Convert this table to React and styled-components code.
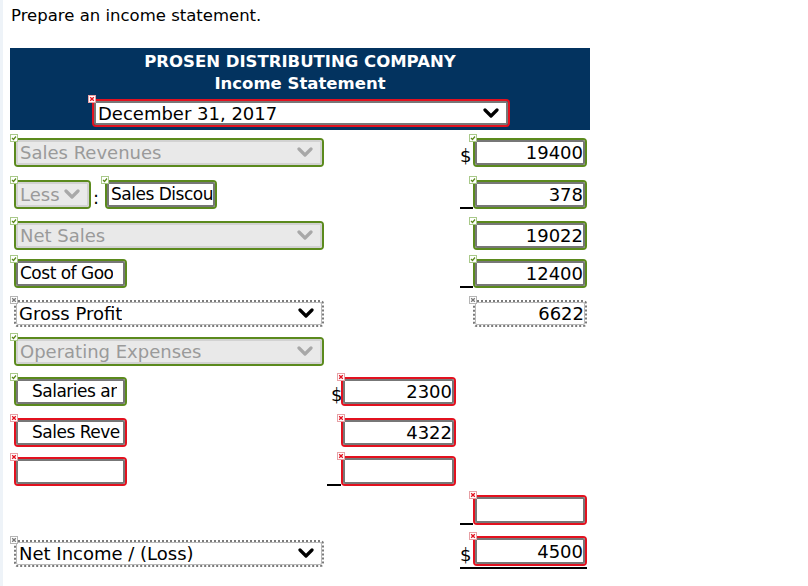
import styled, { createGlobalStyle } from 'styled-components';

const GlobalStyle = createGlobalStyle`
  body {
    margin: 0;
    background: #fff;
    font-family: "DejaVu Sans", Verdana, sans-serif;
    color: #000;
  }
`;

const TONES = {
  green: '#5b8a1d',
  red: '#e2111f',
};

const Page = styled.div`
  border-left: 3px solid #eef3f8;
  min-height: 586px;
  box-sizing: border-box;
  padding: 5px 0 0 7px;
`;

const Prompt = styled.p`
  margin: 0 0 0 1px;
  font-size: 16.5px;
  line-height: 22px;
`;

const Sheet = styled.div`
  width: 580px;
  margin-top: 21px;
`;

const Header = styled.div`
  background: #03335f;
  color: #fff;
  height: 82px;
  box-sizing: border-box;
  padding-top: 3px;
  display: flex;
  flex-direction: column;
  align-items: center;
`;

const HeadLine = styled.div`
  font-weight: bold;
  font-size: 16.5px;
  line-height: 22px;
`;

const DateRow = styled.div`
  margin-top: 4px;
  margin-left: 2px;
`;

const Row = styled.div`
  display: grid;
  grid-template-columns: 317px 129px 134px;
  margin-top: ${(p) => p.$gap}px;
`;

const LeftCell = styled.div`
  display: flex;
  align-items: center;
  padding-left: 4px;
  padding-top: ${(p) => p.$drop || 0}px;
`;

const Colon = styled.span`
  font-size: 18px;
  margin: 6px 6px 0 2px;
`;

const AmtCell = styled.div`
  display: flex;
  align-items: flex-end;
  padding-left: ${(p) => p.$pad}px;
`;

const Dollar = styled.div`
  width: ${(p) => p.$w}px;
  align-self: stretch;
  display: flex;
  align-items: flex-end;
  font-size: 18px;
  line-height: 18px;
  border-bottom: ${(p) => (p.$rule ? '2px solid #000' : '2px solid transparent')};
  box-sizing: border-box;
`;

const Total = styled.div`
  display: flex;
  align-items: flex-end;
  border-bottom: 2px solid #000;
  padding-bottom: 1px;
`;

const Field = styled.div`
  position: relative;
  width: ${(p) => p.$w}px;
  height: ${(p) => p.$h || 29}px;
  box-sizing: border-box;
  border: 2px ${(p) => (p.$tone === 'dotted' ? 'dotted #7a7a7a' : `solid ${TONES[p.$tone]}`)};
  border-radius: 4px;
  flex-shrink: 0;
`;

const Inner = styled.div`
  height: 100%;
  box-sizing: border-box;
  border: ${(p) =>
    p.$off ? '2px solid #d2d2d2' : p.$flat ? '1px solid #b9b9b9' : '2px solid #777'};
  border-radius: 2px;
  background: ${(p) => (p.$off ? '#e9e9e9' : '#fff')};
  color: ${(p) => (p.$off ? '#9a9a9a' : '#000')};
  font-size: ${(p) => (p.$small ? 17 : 18)}px;
  letter-spacing: ${(p) => (p.$small ? '-0.5px' : 'normal')};
  line-height: 21px;
  display: flex;
  align-items: center;
  justify-content: ${(p) => (p.$right ? 'flex-end' : 'space-between')};
  padding: 0 ${(p) => (p.$right ? 0 : p.$small ? 0 : 7)}px 0 ${(p) => p.$indent || 2}px;
  overflow: hidden;
  white-space: nowrap;
`;

const Text = styled.span`
  overflow: hidden;
`;

const MarkBox = styled.span`
  position: absolute;
  left: -6px;
  top: -6px;
  width: 6px;
  height: 6px;
  background: #fff;
  border: 1px solid ${(p) => (p.$kind === 'red' ? '#e7a0a5' : p.$kind === 'green' ? '#a9c98a' : '#b5b5b5')};
  display: flex;
  align-items: center;
  justify-content: center;
  svg { display: block; }
`;

function Mark({ kind }) {
  const color = kind === 'red' ? '#e2111f' : kind === 'green' ? '#5b8a1d' : '#777';
  return (
    <MarkBox $kind={kind}>
      {kind === 'green' ? (
        <svg width="6" height="6" viewBox="0 0 6 6">
          <polyline points="1,3 2.5,4.5 5,1.5" fill="none" stroke={color} strokeWidth="1.2" />
        </svg>
      ) : (
        <svg width="6" height="6" viewBox="0 0 6 6">
          <path d="M1.2 1.2 L4.8 4.8 M4.8 1.2 L1.2 4.8" stroke={color} strokeWidth="1.3" />
        </svg>
      )}
    </MarkBox>
  );
}

function Chevron({ off }) {
  return (
    <svg width="16" height="11" viewBox="0 0 16 11">
      <polyline
        points="2,2 8,8 14,2"
        fill="none"
        stroke={off ? '#a8a8a8' : '#000'}
        strokeWidth="3.2"
        strokeLinecap="round"
        strokeLinejoin="round"
      />
    </svg>
  );
}

function Select({ w, tone, text, off, h }) {
  const mark = tone === 'dotted' ? 'gray' : tone;
  return (
    <Field $w={w} $tone={tone} $h={h}>
      <Mark kind={mark} />
      <Inner $off={off} $flat={tone === 'dotted'}>
        <Text>{text}</Text>
        <Chevron off={off} />
      </Inner>
    </Field>
  );
}

function Input({ w, tone, text, right, indent, h, small }) {
  const mark = tone === 'dotted' ? 'gray' : tone;
  return (
    <Field $w={w} $tone={tone} $h={h}>
      <Mark kind={mark} />
      <Inner $right={right} $indent={indent} $small={small} $flat={tone === 'dotted'}>
        <Text>{text}</Text>
      </Inner>
    </Field>
  );
}

function Amount({ pad = 4, dollar, rule, tone = 'green', value, dw = 13, w = 114, h }) {
  return (
    <AmtCell $pad={pad}>
      <Dollar $w={dw} $rule={rule}>{dollar ? '$' : ''}</Dollar>
      <Input w={w} tone={tone} text={value} right h={h || (tone === 'dotted' ? 27 : 29)} />
    </AmtCell>
  );
}

export default function App() {
  return (
    <>
      <GlobalStyle />
      <Page>
        <Prompt>Prepare an income statement.</Prompt>
        <Sheet>
          <Header>
            <HeadLine>PROSEN DISTRIBUTING COMPANY</HeadLine>
            <HeadLine>Income Statement</HeadLine>
            <DateRow>
              <Select w={418} tone="red" text="December 31, 2017" h={28} />
            </DateRow>
          </Header>

          <Row $gap={8}>
            <LeftCell>
              <Select w={310} tone="green" text="Sales Revenues" off />
            </LeftCell>
            <div />
            <Amount dollar value="19400" />
          </Row>

          <Row $gap={13}>
            <LeftCell>
              <Select w={77} tone="green" text="Less" off />
              <Colon>:</Colon>
              <Input w={112} tone="green" text="Sales Discou" small />
            </LeftCell>
            <div />
            <Amount rule value="378" />
          </Row>

          <Row $gap={12}>
            <LeftCell>
              <Select w={310} tone="green" text="Net Sales" off />
            </LeftCell>
            <div />
            <Amount value="19022" />
          </Row>

          <Row $gap={9}>
            <LeftCell>
              <Input w={113} tone="green" text="Cost of Goo" small />
            </LeftCell>
            <div />
            <Amount rule value="12400" />
          </Row>

          <Row $gap={12}>
            <LeftCell>
              <Select w={310} tone="dotted" text="Gross Profit" h={27} />
            </LeftCell>
            <div />
            <Amount tone="dotted" value="6622" />
          </Row>

          <Row $gap={10}>
            <LeftCell>
              <Select w={310} tone="green" text="Operating Expenses" off />
            </LeftCell>
          </Row>

          <Row $gap={11}>
            <LeftCell>
              <Input w={113} tone="green" text="Salaries ar" indent={14} small />
            </LeftCell>
            <Amount pad={4} dw={10} dollar tone="red" value="2300" w={115} />
          </Row>

          <Row $gap={12}>
            <LeftCell>
              <Input w={113} tone="red" text="Sales Reve" indent={14} small />
            </LeftCell>
            <Amount pad={4} dw={10} tone="red" value="4322" w={115} />
          </Row>

          <Row $gap={9}>
            <LeftCell>
              <Input w={113} tone="red" text="" />
            </LeftCell>
            <Amount pad={0} dw={14} rule tone="red" value="" w={115} h={30} />
          </Row>

          <Row $gap={9}>
            <div />
            <div />
            <Amount rule tone="red" value="" h={30} />
          </Row>

          <Row $gap={11}>
            <LeftCell $drop={1}>
              <Select w={310} tone="dotted" text="Net Income / (Loss)" h={27} />
            </LeftCell>
            <div />
            <AmtCell $pad={4}>
              <Total>
                <Dollar $w={13}>$</Dollar>
                <Input w={114} tone="red" text="4500" right h={30} />
              </Total>
            </AmtCell>
          </Row>
        </Sheet>
      </Page>
    </>
  );
}
